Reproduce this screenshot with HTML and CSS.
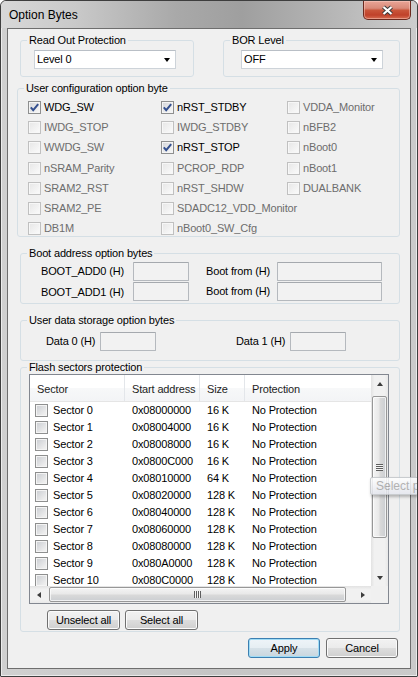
FILE: index.html
```html
<!DOCTYPE html>
<html>
<head>
<meta charset="utf-8">
<title>Option Bytes</title>
<link rel="stylesheet" href="styles.css">
</head>
<body>
<div class="window">
  <div class="titlebar">
    <span class="title">Option Bytes</span>
    <div class="close">
      <svg width="13" height="11" viewBox="0 0 13 11"><path d="M2.5 2 L10.5 9 M10.5 2 L2.5 9" stroke="#3b3b3b" stroke-width="4.2" fill="none"/><path d="M2.5 2 L10.5 9 M10.5 2 L2.5 9" stroke="#ffffff" stroke-width="2.2" fill="none"/></svg>
    </div>
  </div>
  <div class="client">
    <div class="top-row">
      <fieldset class="group g-rop">
        <legend>Read Out Protection</legend>
        <div class="combo"><span>Level 0</span><i class="drop"></i></div>
      </fieldset>
      <fieldset class="group g-bor">
        <legend>BOR Level</legend>
        <div class="combo"><span>OFF</span><i class="drop"></i></div>
      </fieldset>
    </div>

    <fieldset class="group g-user">
      <legend>User configuration option byte</legend>
      <div class="checks">
        <div class="ck"><span class="cb"><svg width="11" height="11" viewBox="0 0 11 11"><path d="M1.8 5.4 L4.2 8.2 L9.2 2.2" fill="none" stroke="#34508f" stroke-width="2"/></svg></span><span>WDG_SW</span></div>
        <div class="ck"><span class="cb"><svg width="11" height="11" viewBox="0 0 11 11"><path d="M1.8 5.4 L4.2 8.2 L9.2 2.2" fill="none" stroke="#34508f" stroke-width="2"/></svg></span><span>nRST_STDBY</span></div>
        <div class="ck dis"><span class="cb"></span><span>VDDA_Monitor</span></div>

        <div class="ck dis"><span class="cb"></span><span>IWDG_STOP</span></div>
        <div class="ck dis"><span class="cb"></span><span>IWDG_STDBY</span></div>
        <div class="ck dis"><span class="cb"></span><span>nBFB2</span></div>

        <div class="ck dis"><span class="cb"></span><span>WWDG_SW</span></div>
        <div class="ck"><span class="cb"><svg width="11" height="11" viewBox="0 0 11 11"><path d="M1.8 5.4 L4.2 8.2 L9.2 2.2" fill="none" stroke="#34508f" stroke-width="2"/></svg></span><span>nRST_STOP</span></div>
        <div class="ck dis"><span class="cb"></span><span>nBoot0</span></div>

        <div class="ck dis"><span class="cb"></span><span>nSRAM_Parity</span></div>
        <div class="ck dis"><span class="cb"></span><span>PCROP_RDP</span></div>
        <div class="ck dis"><span class="cb"></span><span>nBoot1</span></div>

        <div class="ck dis"><span class="cb"></span><span>SRAM2_RST</span></div>
        <div class="ck dis"><span class="cb"></span><span>nRST_SHDW</span></div>
        <div class="ck dis"><span class="cb"></span><span>DUALBANK</span></div>

        <div class="ck dis"><span class="cb"></span><span>SRAM2_PE</span></div>
        <div class="ck dis"><span class="cb"></span><span>SDADC12_VDD_Monitor</span></div>
        <div></div>

        <div class="ck dis"><span class="cb"></span><span>DB1M</span></div>
        <div class="ck dis"><span class="cb"></span><span>nBoot0_SW_Cfg</span></div>
        <div></div>
      </div>
    </fieldset>

    <fieldset class="group g-boot">
      <legend>Boot address option bytes</legend>
      <div class="boot-grid">
        <span class="lbl">BOOT_ADD0 (H)</span><span class="tb w56"></span>
        <span class="lbl">Boot from (H)</span><span class="tb w105"></span>
        <span class="lbl low">BOOT_ADD1 (H)</span><span class="tb w56"></span>
        <span class="lbl">Boot from (H)</span><span class="tb w105"></span>
      </div>
    </fieldset>

    <fieldset class="group g-data">
      <legend>User data storage option bytes</legend>
      <div class="data-grid">
        <span class="lbl">Data 0 (H)</span><span class="tb w56"></span>
        <span class="lbl">Data 1 (H)</span><span class="tb w56"></span>
      </div>
    </fieldset>

    <fieldset class="group g-flash">
      <legend>Flash sectors protection</legend>
      <div class="list">
        <div class="lv-main">
          <div class="lv">
            <div class="lv-head">
              <div class="hc c1">Sector</div>
              <div class="hc c2">Start address</div>
              <div class="hc c3">Size</div>
              <div class="hc c4">Protection</div>
            </div>
            <div class="row"><div class="c1"><span class="cb lcb"></span><span>Sector 0</span></div><div class="c2">0x08000000</div><div class="c3">16 K</div><div class="c4">No Protection</div></div>
            <div class="row"><div class="c1"><span class="cb lcb"></span><span>Sector 1</span></div><div class="c2">0x08004000</div><div class="c3">16 K</div><div class="c4">No Protection</div></div>
            <div class="row"><div class="c1"><span class="cb lcb"></span><span>Sector 2</span></div><div class="c2">0x08008000</div><div class="c3">16 K</div><div class="c4">No Protection</div></div>
            <div class="row"><div class="c1"><span class="cb lcb"></span><span>Sector 3</span></div><div class="c2">0x0800C000</div><div class="c3">16 K</div><div class="c4">No Protection</div></div>
            <div class="row"><div class="c1"><span class="cb lcb"></span><span>Sector 4</span></div><div class="c2">0x08010000</div><div class="c3">64 K</div><div class="c4">No Protection</div></div>
            <div class="row"><div class="c1"><span class="cb lcb"></span><span>Sector 5</span></div><div class="c2">0x08020000</div><div class="c3">128 K</div><div class="c4">No Protection</div></div>
            <div class="row"><div class="c1"><span class="cb lcb"></span><span>Sector 6</span></div><div class="c2">0x08040000</div><div class="c3">128 K</div><div class="c4">No Protection</div></div>
            <div class="row"><div class="c1"><span class="cb lcb"></span><span>Sector 7</span></div><div class="c2">0x08060000</div><div class="c3">128 K</div><div class="c4">No Protection</div></div>
            <div class="row"><div class="c1"><span class="cb lcb"></span><span>Sector 8</span></div><div class="c2">0x08080000</div><div class="c3">128 K</div><div class="c4">No Protection</div></div>
            <div class="row"><div class="c1"><span class="cb lcb"></span><span>Sector 9</span></div><div class="c2">0x080A0000</div><div class="c3">128 K</div><div class="c4">No Protection</div></div>
            <div class="row"><div class="c1"><span class="cb lcb"></span><span>Sector 10</span></div><div class="c2">0x080C0000</div><div class="c3">128 K</div><div class="c4">No Protection</div></div>
          </div>
          <div class="vscroll">
            <div class="sb-btn"><i class="arr-up"></i></div>
            <div class="vtrack"><div class="vthumb"><i class="grip-v"></i></div></div>
            <div class="sb-btn"><i class="arr-down"></i></div>
          </div>
        </div>
        <div class="hbar">
          <div class="hscroll">
            <div class="sb-btn"><i class="arr-left"></i></div>
            <div class="htrack"><div class="hthumb"><i class="grip-h"></i></div></div>
            <div class="sb-btn"><i class="arr-right"></i></div>
          </div>
          <div class="corner"></div>
        </div>
      </div>
      <div class="sel-btns">
        <div class="btn w73">Unselect all</div>
        <div class="btn w73">Select all</div>
      </div>
    </fieldset>

    <div class="dlg-btns">
      <div class="btn default w72">Apply</div>
      <div class="btn w72">Cancel</div>
    </div>
  </div>
  <div class="tooltip">Select p</div>
</div>
</body>
</html>
```

FILE: styles.css
```css
* { box-sizing: border-box; }
html, body { margin: 0; padding: 0; }
body {
  width: 418px;
  height: 677px;
  overflow: hidden;
  background: #ffffff;
  font-family: "Liberation Sans", Arial, sans-serif;
  font-size: 11px;
  line-height: 13px;
  letter-spacing: -0.15px;
  color: #000;
}

/* ---------- window frame ---------- */
.window {
  position: relative;
  width: 418px;
  height: 677px;
  display: flex;
  flex-direction: column;
  padding: 0 6px 7px;
  border: 1px solid #3e3e3e;
  border-radius: 6px 6px 1px 1px;
  background: linear-gradient(90deg, #d0d0d0 0%, #c5c5c5 50%, #cacaca 100%);
  box-shadow: inset 0 0 0 1px rgba(255,255,255,0.6);
  overflow: hidden;
}
.titlebar {
  height: 27px;
  flex: none;
  margin: 0 -6px;
  padding-left: 8px;
  display: flex;
  align-items: flex-start;
  justify-content: space-between;
  border-radius: 5px 5px 0 0;
  background: linear-gradient(90deg, #d8d8d8 0%, #c9c9c9 18%, #a9a9a9 42%, #9f9f9f 58%, #b4b4b4 78%, #cdcdcd 100%);
}
.title {
  font-size: 12px;
  line-height: 28px;
  letter-spacing: 0;
  color: #000;
}
.close {
  width: 48px;
  height: 19px;
  margin-right: 6px;
  display: flex;
  align-items: center;
  justify-content: center;
  border: 1px solid #6b2a1f;
  border-top: none;
  border-radius: 0 0 5px 5px;
  background: linear-gradient(180deg, #e9a597 0%, #d98a79 40%, #c9553a 52%, #c0412a 78%, #d66d52 100%);
  box-shadow: inset 0 0 0 1px rgba(255,215,205,0.45);
}
.close svg { display: block; }

.client {
  flex: 1;
  display: flex;
  flex-direction: column;
  align-items: flex-start;
  border: 1px solid #6e6e6e;
  background: #f0f0f0;
}

/* ---------- group boxes ---------- */
.group {
  margin: 0;
  padding: 0;
  min-width: 0;
  border: 1px solid #d5dfe5;
  border-radius: 3px;
}
.group > legend {
  margin-left: 6px;
  padding: 0 2px;
  height: 13px;
  line-height: 13px;
}

.top-row {
  display: flex;
  gap: 29px;
  margin: 5px 0 0 12px;
}
.g-rop { width: 174px; }
.g-bor { width: 177px; }
.g-rop .combo { margin: 3px 0 7px 13px; }
.g-bor .combo { margin: 3px 0 7px 17px; }

.combo {
  width: 142px;
  height: 19px;
  display: flex;
  align-items: center;
  padding-left: 2px;
  background: #ffffff;
  border: 1px solid #cdd3d9;
  border-top-color: #b9bfc6;
}
.drop {
  margin-left: auto;
  margin-right: 5px;
  width: 0;
  height: 0;
  border-top: 4px solid #000;
  border-left: 3.5px solid transparent;
  border-right: 3.5px solid transparent;
}

/* ---------- checkboxes ---------- */
.g-user { width: 383px; margin: 5px 0 0 9px; }
.checks {
  display: grid;
  grid-template-columns: 133px 126px 110px;
  grid-auto-rows: 20.3px;
  margin: 2px 0 -3px 10px;
}
.ck {
  display: flex;
  align-items: center;
  gap: 3px;
  white-space: nowrap;
}
.ck.dis { color: #6d6d6d; }

.cb {
  flex: none;
  width: 13px;
  height: 13px;
  display: block;
  border: 1px solid #8e8f8f;
  background: linear-gradient(135deg, #d3d5d9 0%, #f4f4f4 85%);
  box-shadow: inset 0 0 0 1px #f4f4f4;
}
.cb svg { display: block; }
.ck.dis .cb {
  border-color: #c0c0c0;
  background: linear-gradient(135deg, #e6e6e6 0%, #f8f8f8 85%);
  box-shadow: inset 0 0 0 1px #f7f7f7;
}

/* ---------- text boxes ---------- */
.tb {
  display: block;
  height: 19px;
  border: 1px solid #b5b9be;
  border-top-color: #a5a9ae;
  border-radius: 1px;
  background: #f2f2f2;
}
.w56 { width: 56px; }
.w105 { width: 105px; }
.lbl { white-space: nowrap; }
.lbl.low { position: relative; top: 1px; }

.g-boot { width: 380px; margin: 10px 0 0 12px; }
.boot-grid {
  display: grid;
  grid-template-columns: 92px 73px 71px 105px;
  grid-template-rows: 19px 19px;
  row-gap: 1px;
  align-items: center;
  margin: 2px 0 2px 20px;
}

.g-data { width: 380px; margin: 10px 0 0 12px; }
.data-grid {
  display: grid;
  grid-template-columns: 54px 136px 54px 56px;
  grid-template-rows: 19px;
  align-items: center;
  margin: 5px 0 9px 25px;
}

/* ---------- list view ---------- */
.g-flash { width: 380px; margin: 0 0 0 12px; }
.list {
  width: 360px;
  height: 230px;
  margin-left: 8px;
  display: flex;
  flex-direction: column;
  border: 1px solid #828790;
  background: #ffffff;
}
.lv-main { display: flex; height: 211px; flex: none; }
.lv { flex: 1; min-width: 0; overflow: hidden; }
.lv-head {
  display: flex;
  height: 27px;
  border-bottom: 1px solid #e5e5e5;
  background: linear-gradient(180deg, #ffffff 0%, #ffffff 50%, #f7f8f9 51%, #f3f4f6 100%);
}
.hc {
  display: flex;
  align-items: center;
  padding: 3px 0 0 7px;
  border-right: 1px solid #e3e6ea;
  color: #1e1e1e;
  white-space: nowrap;
}
.c1 { width: 95px; flex: none; }
.c2 { width: 75px; flex: none; padding-left: 7px; }
.c3 { width: 45px; flex: none; padding-left: 7px; }
.c4 { flex: 1; padding-left: 7px; }
.hc.c4 { border-right: none; }

.row {
  display: flex;
  align-items: center;
  height: 17px;
  white-space: nowrap;
}
.row .c1 {
  display: flex;
  align-items: center;
  gap: 5px;
  padding-left: 5px;
}
.lcb {
  border-color: #8e8f8f;
  background: linear-gradient(135deg, #c9ccd1 0%, #eeeeee 80%);
}

/* ---------- scrollbars ---------- */
.vscroll {
  width: 17px;
  flex: none;
  display: flex;
  flex-direction: column;
  background: linear-gradient(90deg, #e2e2e2 0%, #f1f1f1 20%, #f1f1f1 80%, #e8e8e8 100%);
}
.sb-btn {
  width: 17px;
  height: 17px;
  flex: none;
  display: flex;
  align-items: center;
  justify-content: center;
}
.arr-up, .arr-down, .arr-left, .arr-right { display: block; width: 0; height: 0; }
.arr-up {
  border-bottom: 4px solid #3c3c3c;
  border-left: 3.5px solid transparent;
  border-right: 3.5px solid transparent;
}
.arr-down {
  border-top: 4px solid #3c3c3c;
  border-left: 3.5px solid transparent;
  border-right: 3.5px solid transparent;
}
.arr-left {
  border-right: 4px solid #3c3c3c;
  border-top: 3.5px solid transparent;
  border-bottom: 3.5px solid transparent;
}
.arr-right {
  border-left: 4px solid #3c3c3c;
  border-top: 3.5px solid transparent;
  border-bottom: 3.5px solid transparent;
}
.vtrack { flex: 1; padding: 4px 1px 0; }
.vthumb {
  height: 142px;
  display: flex;
  align-items: center;
  justify-content: center;
  border: 1px solid #979797;
  border-radius: 2px;
  background: linear-gradient(90deg, #f4f4f4 0%, #e9e9e9 45%, #d9d9d9 55%, #cbced2 100%);
  box-shadow: inset 0 0 0 1px rgba(255,255,255,0.7);
}
.grip-v {
  display: block;
  width: 7px;
  height: 7px;
  background: repeating-linear-gradient(180deg, #5e5e5e 0 1px, #f4f4f4 1px 2px);
}

.hbar { display: flex; height: 17px; flex: none; }
.hscroll {
  flex: 1;
  display: flex;
  background: linear-gradient(180deg, #e2e2e2 0%, #f1f1f1 20%, #f1f1f1 80%, #e8e8e8 100%);
}
.htrack { flex: 1; padding: 1px 0 1px 2px; }
.hthumb {
  width: 297px;
  height: 15px;
  display: flex;
  align-items: center;
  justify-content: center;
  border: 1px solid #979797;
  border-radius: 2px;
  background: linear-gradient(180deg, #f4f4f4 0%, #e9e9e9 45%, #d9d9d9 55%, #cbced2 100%);
  box-shadow: inset 0 0 0 1px rgba(255,255,255,0.7);
}
.grip-h {
  display: block;
  width: 7px;
  height: 7px;
  background: repeating-linear-gradient(90deg, #5e5e5e 0 1px, #f4f4f4 1px 2px);
}
.corner { width: 17px; flex: none; background: #f0f0f0; }

/* ---------- buttons ---------- */
.btn {
  height: 20px;
  display: flex;
  align-items: center;
  justify-content: center;
  border: 1px solid #707070;
  border-radius: 3px;
  background: linear-gradient(180deg, #f2f2f2 0%, #ebebeb 48%, #dddddd 52%, #cfcfcf 100%);
  box-shadow: inset 0 0 0 1px #fbfbfb;
  white-space: nowrap;
}
.btn.default {
  border-color: #3c7fb1;
  box-shadow: inset 0 0 0 1px #9fdcf6;
  background: linear-gradient(180deg, #eef4f8 0%, #e6eef3 48%, #d6e1e8 52%, #c9d6de 100%);
}
.w73 { width: 73px; }
.w72 { width: 72px; }
.sel-btns {
  display: flex;
  gap: 5px;
  margin: 6px 0 1px 26px;
}
.dlg-btns {
  display: flex;
  gap: 6px;
  align-self: flex-end;
  margin: 6px 12px 0 0;
}

/* ---------- tooltip (overlay) ---------- */
.tooltip {
  position: absolute;
  left: 369px;
  top: 476px;
  width: 70px;
  height: 18px;
  padding: 2px 0 0 5px;
  border: 1px solid #c3c6ca;
  border-radius: 2px;
  background: linear-gradient(180deg, #ffffff 0%, #e5e7ef 100%);
  color: #a8a8a8;
  font-size: 12px;
  line-height: 13px;
  letter-spacing: 0;
  white-space: nowrap;
  box-shadow: 1px 2px 3px rgba(0,0,0,0.3);
  opacity: 0.85;
}
```
